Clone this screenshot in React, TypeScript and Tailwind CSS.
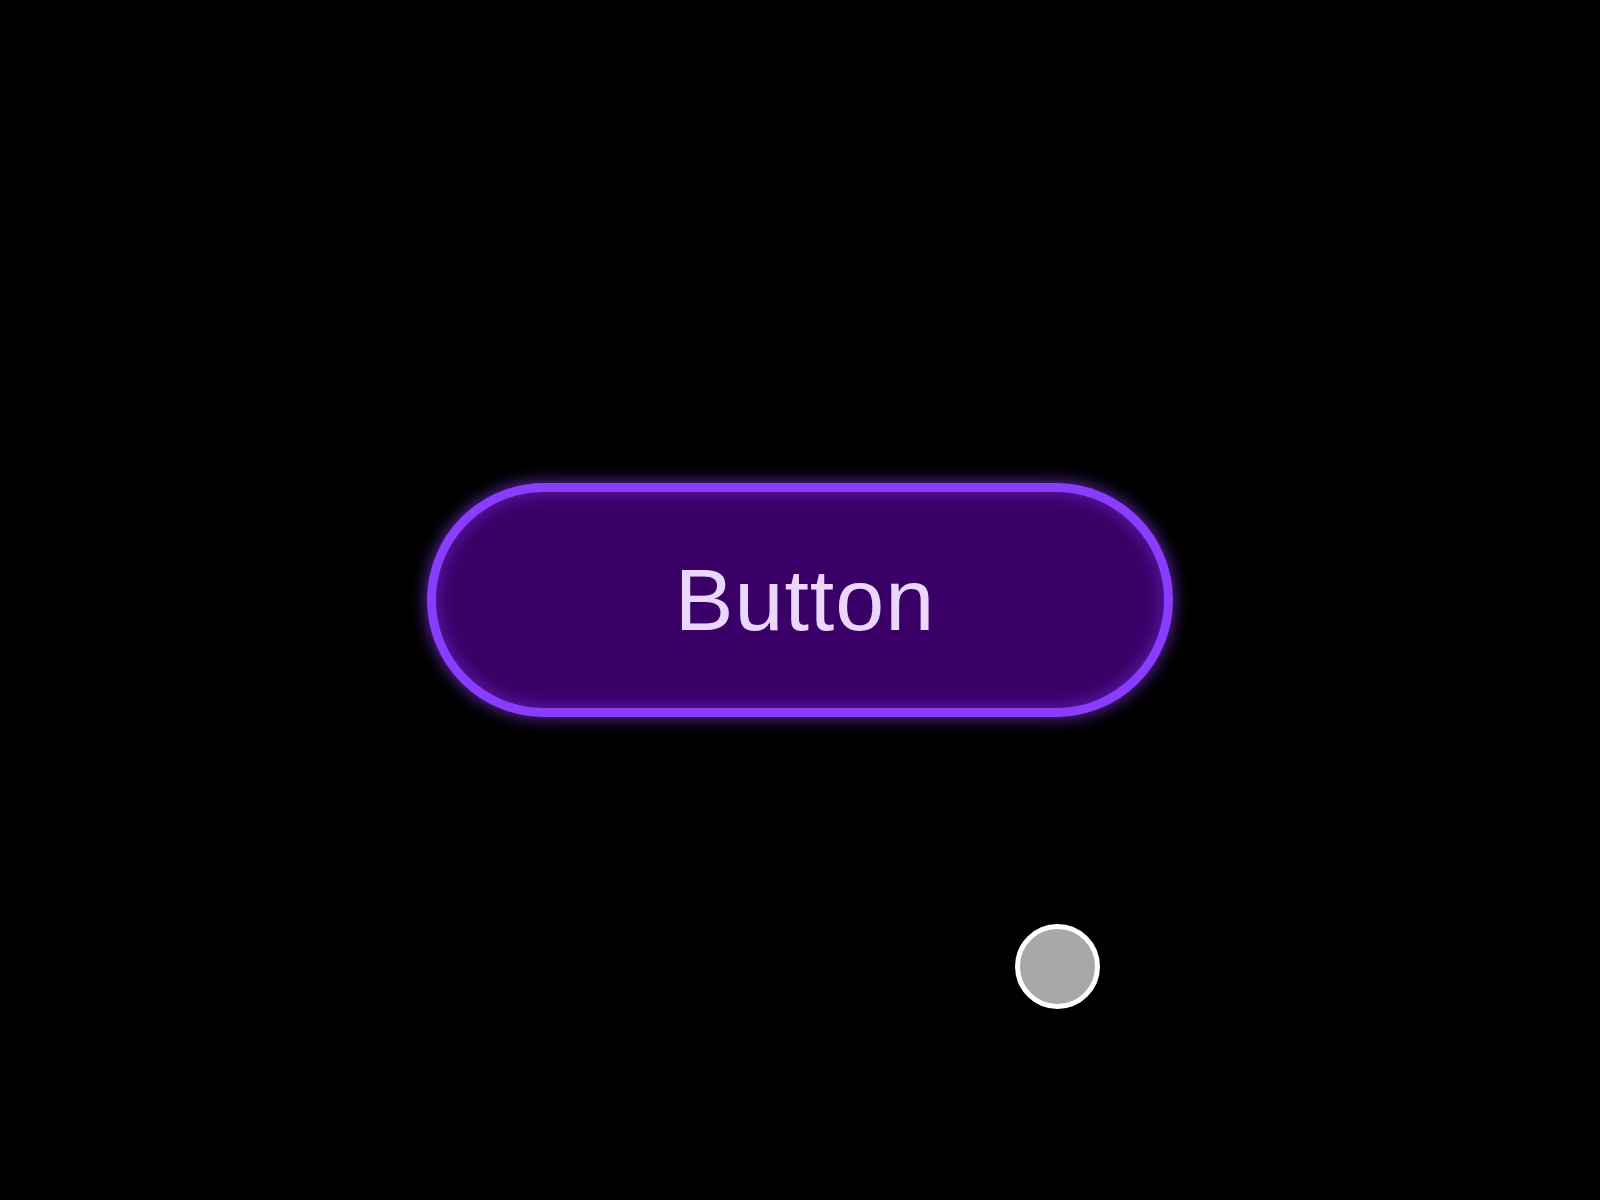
import React from 'react';

export default function App() {
  return (
    <div className="relative w-full h-[1200px] bg-black flex items-center justify-center overflow-hidden">
      <button
        className="w-[746px] h-[234px] pl-[10px] rounded-full border-[9px] border-[#8a3cff] bg-[#3a0068] text-[#ead6ff] text-[88px] tracking-[1px] leading-none shadow-[0_0_14px_3px_rgba(138,60,255,0.55),inset_0_0_14px_4px_rgba(138,60,255,0.35)]"
        style={{ fontFamily: '"Liberation Sans", Arial, sans-serif' }}
      >
        Button
      </button>
      {/* pointer indicator */}
      <div className="absolute left-[1015px] top-[924px] w-[85px] h-[85px] rounded-full border-[5px] border-white bg-[#a8a8a8]" />
    </div>
  );
}
